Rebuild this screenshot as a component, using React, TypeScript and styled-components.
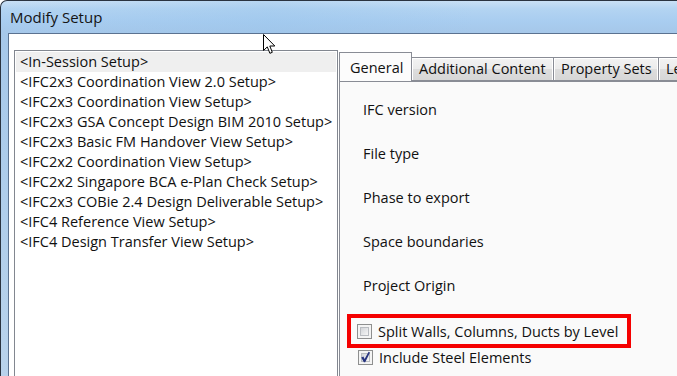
import React from "react";
import styled, { createGlobalStyle } from "styled-components";

const Global = createGlobalStyle`
  html, body { margin: 0; padding: 0; width: 677px; height: 376px; overflow: hidden; background: #fff; }
  * { box-sizing: border-box; }
`;

const FONT = `"Segoe UI", "Open Sans", "Noto Sans", sans-serif`;

const Window = styled.div`
  position: relative;
  width: 677px;
  height: 376px;
  display: flex;
  flex-direction: column;
  overflow: hidden;
  border-left: 1px solid #2a3340;
  border-top: 1px solid #2a3340;
  border-top-left-radius: 7px;
  background:
    linear-gradient(90deg, rgba(255,255,255,0) 0%, rgba(150,195,235,0.35) 40%, rgba(255,255,255,0) 70%),
    linear-gradient(180deg, #c9e0f5 0px, #b3d4f2 8px, #a9cdf0 20px, #a6c8ea 31px, #b9d3ec 100%);
  font-family: ${FONT};
  color: #000;
`;

const TitleBar = styled.div`
  height: 32px;
  flex: none;
  display: flex;
  align-items: center;
  padding-left: 9px;
  font-size: 15px;
  color: #141414;
`;

const Body = styled.div`
  flex: 1;
  display: flex;
  margin-left: 7px;
  padding: 16px 0 0 5px;
  background: #fff;
  border-top: 1px solid #5b7290;
  border-left: 1px solid #5b7290;
  min-height: 0;
`;

const ListBox = styled.div`
  width: 324px;
  flex: none;
  border: 1px solid #828790;
  border-bottom: none;
  padding: 1px;
  background: #fff;
  display: flex;
  flex-direction: column;
`;

const ListItem = styled.div<{ $selected?: boolean }>`
  height: 20px;
  line-height: 20px;
  padding-left: 4px;
  font-size: 14.5px;
  white-space: nowrap;
  color: #111;
  background: ${(p) => (p.$selected ? "#efefef" : "transparent")};
`;

const TabControl = styled.div`
  flex: 1;
  margin-left: 1px;
  display: flex;
  flex-direction: column;
  min-width: 0;
`;

const TabStrip = styled.div`
  height: 31px;
  flex: none;
  display: flex;
  align-items: flex-end;
  white-space: nowrap;
  overflow: hidden;
`;

const Tab = styled.div<{ $active?: boolean; $w: number }>`
  position: relative;
  z-index: ${(p) => (p.$active ? 2 : 1)};
  flex: none;
  width: ${(p) => p.$w}px;
  height: ${(p) => (p.$active ? 30 : 24)}px;
  margin-bottom: ${(p) => (p.$active ? -1 : 0)}px;
  margin-left: ${(p) => (p.$active ? 0 : -1)}px;
  padding-left: ${(p) => (p.$active ? 10 : 7)}px;
  border: 1px solid #898c95;
  border-bottom: ${(p) => (p.$active ? "none" : "1px solid #898c95")};
  background: ${(p) =>
    p.$active
      ? "#fcfcfc"
      : "linear-gradient(180deg, #f3f3f3 0%, #ebebeb 50%, #dddddd 51%, #d7d7d7 100%)"};
  box-shadow: ${(p) => (p.$active ? "none" : "inset 1px 1px 0 #fff, inset -1px 0 0 #fff")};
  font-size: 14.5px;
  line-height: ${(p) => (p.$active ? 30 : 22)}px;
  color: #111;
  overflow: hidden;
  &:first-child { margin-left: 0; }
`;

const Panel = styled.div`
  flex: 1;
  border-top: 1px solid #898c95;
  border-left: 1px solid #898c95;
  background: #fafafa;
  padding: 18px 0 0 7px;
  display: flex;
  flex-direction: column;
`;

const Fields = styled.div`
  display: flex;
  flex-direction: column;
  gap: 24px;
  padding-left: 16px;
`;

const FieldLabel = styled.div`
  height: 20px;
  line-height: 20px;
  font-size: 14.5px;
  color: #111;
`;

const Highlight = styled.div`
  margin-top: 18px;
  width: 284px;
  height: 34px;
  border: 4px solid #f50000;
  display: flex;
  align-items: center;
  padding-left: 6px;
`;

const CheckRow = styled.div<{ $indent?: number }>`
  display: flex;
  align-items: center;
  gap: 6px;
  height: 16px;
  padding-left: ${(p) => p.$indent ?? 0}px;
  font-size: 14.5px;
  color: #111;
  white-space: nowrap;
`;

const Second = styled(CheckRow)`
  margin-top: 1px;
`;

const Box = styled.span`
  position: relative;
  flex: none;
  width: 15px;
  height: 15px;
  border: 1px solid #8e8f8f;
  background: #f4f4f4;
  display: flex;
  align-items: center;
  justify-content: center;
  &::before {
    content: "";
    position: absolute;
    inset: 2px;
    border: 1px solid #b9bcc1;
    background: linear-gradient(135deg, #d3d5d9 0%, #e6e7e9 55%, #f6f6f6 100%);
  }
  svg { position: relative; z-index: 1; }
`;

const Cursor = styled.svg`
  position: absolute;
  left: 262px;
  top: 33px;
  z-index: 10;
`;

const Checkbox = ({ checked }: { checked?: boolean }) => (
  <Box>
    {checked && (
      <svg width="11" height="12" viewBox="0 0 11 12">
        <path d="M1.2 6.6 L3.4 5.4 L4.6 8 L8.6 0.8 L10 1.6 L5.2 11.2 L3.9 11.2 Z" fill="#26337f" />
      </svg>
    )}
  </Box>
);

const setups = [
  "<In-Session Setup>",
  "<IFC2x3 Coordination View 2.0 Setup>",
  "<IFC2x3 Coordination View Setup>",
  "<IFC2x3 GSA Concept Design BIM 2010 Setup>",
  "<IFC2x3 Basic FM Handover View Setup>",
  "<IFC2x2 Coordination View Setup>",
  "<IFC2x2 Singapore BCA e-Plan Check Setup>",
  "<IFC2x3 COBie 2.4 Design Deliverable Setup>",
  "<IFC4 Reference View Setup>",
  "<IFC4 Design Transfer View Setup>",
];

const tabs = [
  { label: "General", w: 73, active: true },
  { label: "Additional Content", w: 143 },
  { label: "Property Sets", w: 106 },
  { label: "Level of Detail", w: 80 },
];

const fields = ["IFC version", "File type", "Phase to export", "Space boundaries", "Project Origin"];

export default function App() {
  return (
    <Window>
      <Global />
      <TitleBar>Modify Setup</TitleBar>
      <Body>
        <ListBox>
          {setups.map((s, i) => (
            <ListItem key={s} $selected={i === 0}>
              {s}
            </ListItem>
          ))}
        </ListBox>
        <TabControl>
          <TabStrip>
            {tabs.map((t) => (
              <Tab key={t.label} $active={t.active} $w={t.w}>
                {t.label}
              </Tab>
            ))}
          </TabStrip>
          <Panel>
            <Fields>
              {fields.map((f) => (
                <FieldLabel key={f}>{f}</FieldLabel>
              ))}
            </Fields>
            <Highlight>
              <CheckRow>
                <Checkbox />
                <span>Split Walls, Columns, Ducts by Level</span>
              </CheckRow>
            </Highlight>
            <Second $indent={11}>
              <Checkbox checked />
              <span>Include Steel Elements</span>
            </Second>
          </Panel>
        </TabControl>
      </Body>
      <Cursor width="14" height="21" viewBox="0 0 14 21">
        <path
          d="M0.5 0.5 L0.5 16.5 L4.3 12.9 L6.9 19.3 L9.3 18.3 L6.8 12 L11.8 12 Z"
          fill="#fff"
          stroke="#000"
          strokeWidth="1"
          strokeLinejoin="miter"
        />
      </Cursor>
    </Window>
  );
}
